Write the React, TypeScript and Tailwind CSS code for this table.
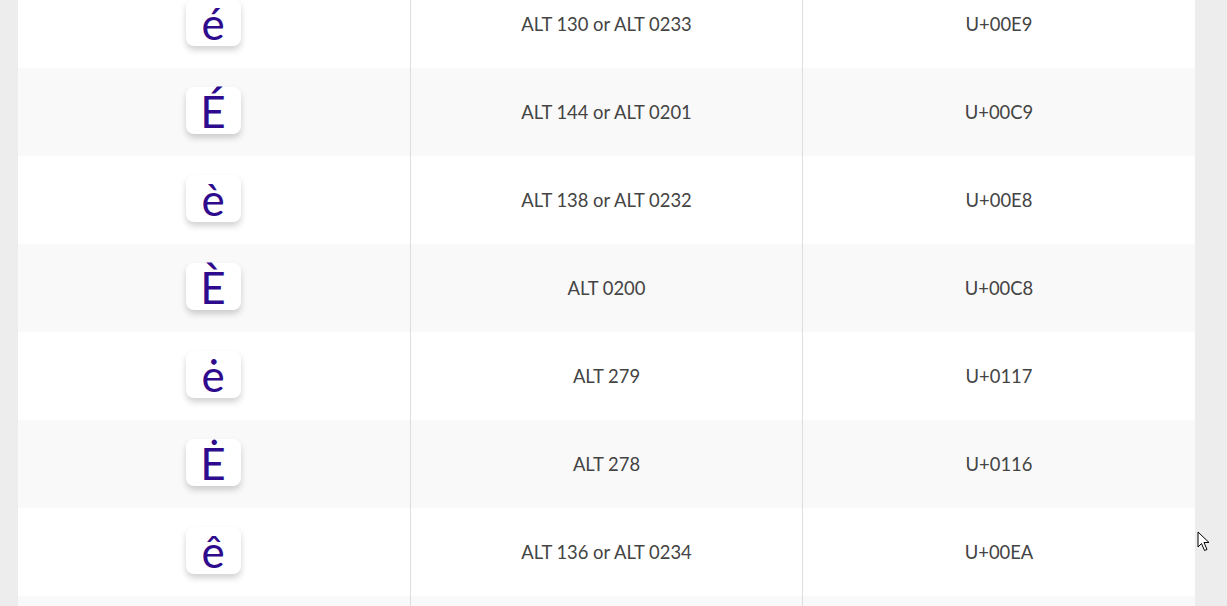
import React from "react";

const rows = [
  { ch: "é", alt: "ALT 130 or ALT 0233", code: "U+00E9" },
  { ch: "É", alt: "ALT 144 or ALT 0201", code: "U+00C9" },
  { ch: "è", alt: "ALT 138 or ALT 0232", code: "U+00E8" },
  { ch: "È", alt: "ALT 0200", code: "U+00C8" },
  { ch: "ė", alt: "ALT 279", code: "U+0117" },
  { ch: "Ė", alt: "ALT 278", code: "U+0116" },
  { ch: "ê", alt: "ALT 136 or ALT 0234", code: "U+00EA" },
  { ch: "Ê", alt: "ALT 0202", code: "U+00CA" },
];

const Cursor = () => (
  <svg width="14" height="22" viewBox="0 0 14 22" className="absolute left-[1197px] top-[531px]">
    <path
      d="M1 1 L1 16 L4.5 12.5 L7.5 19.5 L10 18.5 L7 11.5 L12 11.5 Z"
      fill="#fff"
      stroke="#000"
      strokeWidth="1"
      strokeLinejoin="round"
    />
  </svg>
);

export default function App() {
  return (
    <div className="relative h-[606px] w-[1227px] overflow-hidden bg-[#ededed] font-['Lato',sans-serif]">
      <div className="ml-[18px] mt-[-20px] w-[1177px] bg-white">
        {rows.map((r, i) => (
          <div
            key={i}
            className={`grid h-[88px] grid-cols-[393px_392px_392px] ${i % 2 === 1 ? "bg-[#f9f9f9]" : "bg-white"}`}
          >
            <div className="flex items-center justify-center border-r border-[#dedede]">
              <div className="mb-[3px] mr-[2px] flex h-[47px] w-[55px] items-center justify-center rounded-[8px] bg-white shadow-[0_4px_6px_rgba(0,0,0,0.18)]">
                <span className="text-[44px] leading-none text-[#2d0b8c]">{r.ch}</span>
              </div>
            </div>
            <div className="flex items-center justify-center border-r border-[#dedede] pt-[2px] text-[18.4px] text-[#444]">
              {r.alt}
            </div>
            <div className="flex items-center justify-center pt-[2px] text-[18.4px] text-[#444]">{r.code}</div>
          </div>
        ))}
      </div>
      <Cursor />
    </div>
  );
}
